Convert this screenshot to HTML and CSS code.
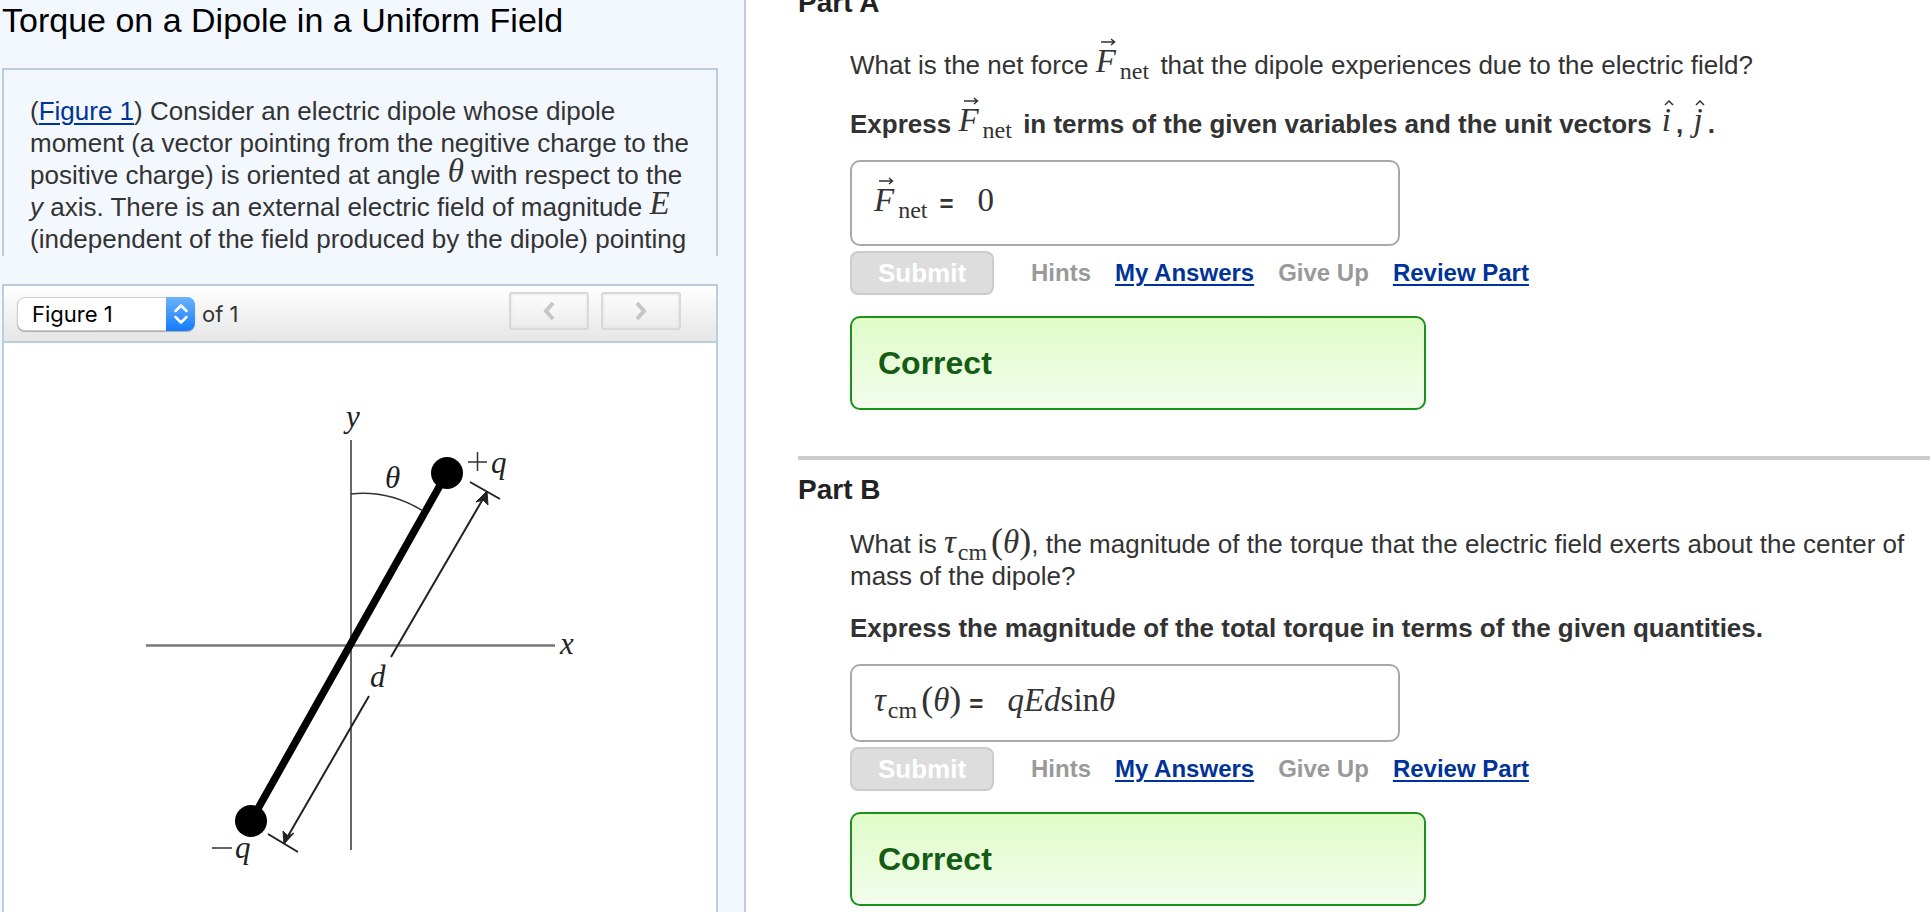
FILE: index.html
```html
<!DOCTYPE html>
<html lang="en">

<head>
    <meta charset="UTF-8">
    <meta name="viewport" content="width=device-width, initial-scale=1.0">
    <title>Torque on a Dipole in a Uniform Field</title>
    <link rel="stylesheet" href="styles.css">
</head>

<body>
    <div class="page">
        <!-- Problem statement and figure -->
        <aside class="sidebar">
            <h1>Torque on a Dipole in a Uniform Field</h1>

            <div class="intro">
                <p>(<a href="#figure">Figure 1</a>) Consider an electric dipole whose dipole moment (a vector pointing from the negitive charge to the positive charge) is oriented at angle <span class="math raised">θ</span> with respect to the <i>y</i> axis. There is an external electric field of magnitude <span class="math raised">E</span> (independent of the field produced by the dipole) pointing</p>
            </div>

            <section class="figure" id="figure">
                <div class="toolbar">
                    <div class="select-wrap">
                        <select id="figureSelect" aria-label="Figure">
                            <option>Figure 1</option>
                        </select>
                        <span class="select-cap">
                            <svg width="14" height="20" viewBox="0 0 14 20" fill="none" stroke="#fff" stroke-width="2.500" stroke-linecap="round" stroke-linejoin="round">
                                <path d="M1.500 7 L7 1.500 L12.500 7 M1.500 13 L7 18.500 L12.500 13" />
                            </svg>
                        </span>
                    </div>
                    <label for="figureSelect">of 1</label>
                    <div class="nav">
                        <button type="button" aria-label="Previous figure">
                            <svg width="14" height="20" viewBox="0 0 14 20" fill="none" stroke="#c6c6c6" stroke-width="4">
                                <path d="M11 2 L4 10 L11 18" />
                            </svg>
                        </button>
                        <button type="button" aria-label="Next figure">
                            <svg width="14" height="20" viewBox="0 0 14 20" fill="none" stroke="#c6c6c6" stroke-width="4">
                                <path d="M3 2 L10 10 L3 18" />
                            </svg>
                        </button>
                    </div>
                </div>

                <svg class="diagram" width="460" height="500" viewBox="0 0 460 500" role="img" aria-label="Dipole at angle theta to the y axis">
                    <!-- axes -->
                    <path d="M221 50 V460" stroke="#666" stroke-width="2" />
                    <path d="M16 255.500 H425" stroke="#777" stroke-width="2.500" />
                    <!-- dipole -->
                    <path d="M317 83 L121 431" stroke="#000" stroke-width="7.500" />
                    <circle cx="317" cy="83" r="16" />
                    <circle cx="121" cy="431" r="16" />
                    <!-- angle -->
                    <path d="M221 104 Q259 100 293 121" fill="none" stroke="#333" stroke-width="1.500" />
                    <!-- length d -->
                    <g stroke="#222" stroke-width="2" fill="none">
                        <path d="M357 102 L261 267 M239 306 L154 453" />
                        <path d="M340 92 L370 109 M138 444 L168 462" />
                    </g>
                    <path d="M357 101 L358 115 L353 110 L346 112 Z" fill="#222" stroke="#222" />
                    <path d="M154 454 L153 441 L158 446 L164 443 Z" fill="#222" stroke="#222" />
                    <g class="labels">
                        <text x="216" y="37">y</text>
                        <text x="430" y="264">x</text>
                        <text x="255" y="98">θ</text>
                        <text x="240" y="297">d</text>
                        <text x="361" y="83">q</text>
                        <text x="105" y="468">q</text>
                    </g>
                    <path d="M338 72 H357 M347.500 62 V81 M82 458 H102" stroke="#333" stroke-width="1.500" />
                </svg>
            </section>
        </aside>

        <!-- Question parts -->
        <main>
            <section class="part part-a">
                <h2>Part A</h2>
                <div class="part-body">
                    <p class="question">What is the net force <span class="math raised"><span class="vec">F<svg class="arrow" width="15" height="8" viewBox="0 0 15 8"><path d="M0 4 H13 M10 1 L13.500 4 L10 7" fill="none" stroke="#333" stroke-width="1.500" /></svg></span><sub>net</sub></span> that the dipole experiences due to the electric field?</p>
                    <p class="instruction">Express <span class="math raised"><span class="vec">F<svg class="arrow" width="15" height="8" viewBox="0 0 15 8"><path d="M0 4 H13 M10 1 L13.500 4 L10 7" fill="none" stroke="#333" stroke-width="1.500" /></svg></span><sub>net</sub></span> in terms of the given variables and the unit vectors <span class="math raised"><span class="unit">i<svg class="hat" width="10" height="6" viewBox="0 0 10 6"><path d="M1 5 L5 1 L9 5" fill="none" stroke="#333" stroke-width="1.500" /></svg></span></span>, <span class="math raised"><span class="unit">j<svg class="hat" width="10" height="6" viewBox="0 0 10 6"><path d="M1 5 L5 1 L9 5" fill="none" stroke="#333" stroke-width="1.500" /></svg></span></span>.</p>

                    <div class="answer">
                        <span class="math"><span class="vec">F<svg class="arrow" width="15" height="8" viewBox="0 0 15 8"><path d="M0 4 H13 M10 1 L13.500 4 L10 7" fill="none" stroke="#333" stroke-width="1.500" /></svg></span><sub>net</sub></span>
                        <span class="equals">=</span>
                        <span class="math"><span class="upright">0</span></span>
                    </div>

                    <div class="actions">
                        <button type="button" class="submit" disabled>Submit</button>
                        <button type="button" class="plain" disabled>Hints</button>
                        <a href="#">My Answers</a>
                        <button type="button" class="plain" disabled>Give Up</button>
                        <a href="#">Review Part</a>
                    </div>

                    <div class="feedback">Correct</div>
                </div>
            </section>

            <section class="part part-b">
                <h2>Part B</h2>
                <div class="part-body">
                    <p class="question">What is <span class="math">τ<sub>cm</sub><span class="paren">(</span>θ<span class="paren">)</span></span>, the magnitude of the torque that the electric field exerts about the center of mass of the dipole?</p>
                    <p class="instruction">Express the magnitude of the total torque in terms of the given quantities.</p>

                    <div class="answer">
                        <span class="math">τ<sub>cm</sub><span class="paren">(</span>θ<span class="paren">)</span></span>
                        <span class="equals">=</span>
                        <span class="math">qEd<span class="upright">sin</span>θ</span>
                    </div>

                    <div class="actions">
                        <button type="button" class="submit" disabled>Submit</button>
                        <button type="button" class="plain" disabled>Hints</button>
                        <a href="#">My Answers</a>
                        <button type="button" class="plain" disabled>Give Up</button>
                        <a href="#">Review Part</a>
                    </div>

                    <div class="feedback">Correct</div>
                </div>
            </section>
        </main>
    </div>
</body>

</html>
```
FILE: styles.css
```css
* {
    box-sizing: border-box;
}

body {
    margin: 0;
    font-family: "Liberation Sans", Arial, sans-serif;
    font-size: 26px;
    line-height: 32px;
    color: #333;
    background-color: #fff;
}

h1, h2, p {
    margin: 0;
}

a {
    color: #039;
    text-decoration-thickness: 2px;
    text-underline-offset: 3px;
}

button {
    font-family: inherit;
    padding: 0;
}

.page {
    display: flex;
    height: 100vh;
    overflow: hidden;
}

/* Left column */
.sidebar {
    display: flex;
    flex-direction: column;
    width: 746px;
    max-width: 40%;
    padding: 0 26px 0 2px;
    background-color: #f3f8ff;
    border-right: 2px solid #bccbdd;
}

h1 {
    height: 68px;
    font-size: 34px;
    font-weight: normal;
    line-height: 40px;
    color: #000;
}

.intro {
    height: 188px;
    padding: 25px 24px 0 26px;
    border: 2px solid #bccbdd;
    border-bottom: none;
    overflow: hidden;
}

.figure {
    flex: 1;
    margin-top: 28px;
    background-color: #fff;
    border: 2px solid #bccbdd;
    border-bottom: none;
}

.toolbar {
    display: flex;
    align-items: center;
    gap: 7px;
    height: 57px;
    padding: 0 35px 0 13px;
    background: linear-gradient(#fff, #e6e6e6);
    border-bottom: 2px solid #bccbdd;
    font-family: Inter, "Liberation Sans", sans-serif;
    font-size: 22px;
}

.select-wrap {
    position: relative;
    width: 178px;
    height: 34px;
}

select {
    appearance: none;
    width: 100%;
    height: 100%;
    padding: 0 36px 0 14px;
    font-family: inherit;
    font-size: 22px;
    color: #000;
    background-color: #fff;
    border: 1px solid #ccc;
    border-radius: 8px;
    box-shadow: 0 1px 1px #aaa;
}

.select-cap {
    position: absolute;
    top: 0;
    right: 0;
    display: flex;
    align-items: center;
    justify-content: center;
    width: 29px;
    height: 34px;
    background: linear-gradient(#6bb3fa, #147bff);
    border-radius: 0 8px 8px 0;
    pointer-events: none;
}

.nav {
    display: flex;
    gap: 12px;
    margin-left: auto;
    padding-bottom: 6px;
}

.nav button {
    display: flex;
    align-items: center;
    justify-content: center;
    width: 80px;
    height: 38px;
    background: linear-gradient(#fcfcfc, #ececec);
    border: 2px solid #d9d9d9;
    border-radius: 3px;
    box-shadow: inset 0 0 3px #ddd;
}

.diagram {
    display: block;
    max-width: 100%;
    margin: 47px auto 0;
}

.labels {
    font-family: "Liberation Serif", "Times New Roman", serif;
    font-size: 31px;
    font-style: italic;
    fill: #222;
}

/* Right column */
main {
    flex: 1;
    padding-left: 52px;
}

h2 {
    font-size: 28px;
    line-height: 32px;
    color: #222;
}

.part-a {
    margin-top: -13px;
}

.part-b {
    margin-top: 46px;
    padding-top: 14px;
    border-top: 4px solid #ccc;
}

.part-body {
    padding: 0 24px 0 52px;
}

.question {
    padding-top: 22px;
}

.part-a .question {
    padding-top: 30px;
}

.instruction {
    padding-top: 20px;
    font-weight: bold;
}

.part-a .instruction {
    padding-top: 27px;
}

.answer {
    display: flex;
    align-items: center;
    width: 550px;
    max-width: 100%;
    height: 78px;
    margin-top: 20px;
    padding: 0 22px 6px;
    border: 2px solid #a9a9a9;
    border-radius: 10px;
}

.part-a .answer {
    height: 86px;
}

.actions {
    display: flex;
    align-items: center;
    gap: 24px;
    height: 44px;
    margin-top: 5px;
    font-size: 24px;
    font-weight: bold;
}

.submit {
    width: 144px;
    height: 44px;
    margin-right: 13px;
    font-size: 26px;
    font-weight: bold;
    color: #fff;
    background-color: #ddd;
    border: 2px solid #ccc;
    border-radius: 8px;
}

.plain {
    font-size: 24px;
    font-weight: bold;
    color: #999;
    background: none;
    border: none;
}

.feedback {
    width: 576px;
    max-width: 100%;
    height: 94px;
    margin-top: 21px;
    padding-left: 26px;
    font-size: 32px;
    font-weight: bold;
    line-height: 90px;
    color: #145c14;
    background: linear-gradient(#dffcc8, #f2fdec);
    border: 2px solid #1b911b;
    border-radius: 10px;
}

/* Formulas */
.math {
    font-family: "Liberation Serif", "Times New Roman", serif;
    font-size: 33px;
    font-style: italic;
    font-weight: normal;
    line-height: 0;
    white-space: nowrap;
}

.answer .math {
    line-height: 32px;
}

.math sub {
    margin: 0 4px 0 2px;
    font-size: 24px;
    font-style: normal;
    line-height: 0;
    vertical-align: -7px;
}

.raised {
    vertical-align: 2px;
}

.upright {
    font-style: normal;
}

.paren {
    font-size: 36px;
    font-style: normal;
    line-height: 0;
}

.vec {
    position: relative;
    margin-right: 2px;
}

.arrow {
    position: absolute;
    top: -5px;
    right: 0;
}

.unit {
    position: relative;
    margin: 0 5px 0 3px;
}

.hat {
    position: absolute;
    top: -2px;
    left: 2px;
}

.equals {
    margin: 8px 24px 0 8px;
    font-size: 24px;
    font-weight: bold;
}
```
